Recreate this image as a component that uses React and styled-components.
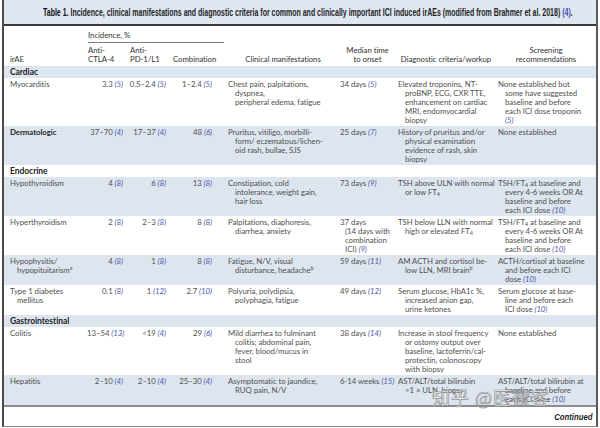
import React from 'react';
import styled, { createGlobalStyle } from 'styled-components';

const GlobalStyle = createGlobalStyle`
  * {
    box-sizing: border-box;
  }
  body {
    margin: 0;
    background: #ffffff;
  }
`;

const COLS = '83px 40px 42px 48px 122px 57px 100px 1fr';

// per column: alignment, paddings and hanging indent
const columns = [
  { align: 'left', pl: 6, pr: 2, hang: 7 },
  { align: 'right', pl: 0, pr: 4, hang: 0 },
  { align: 'right', pl: 0, pr: 3, hang: 0 },
  { align: 'right', pl: 0, pr: 5, hang: 0 },
  { align: 'left', pl: 11, pr: 2, hang: 7 },
  { align: 'left', pl: 1, pr: 0, hang: 5 },
  { align: 'left', pl: 2, pr: 0, hang: 7 },
  { align: 'left', pl: 2, pr: 0, hang: 7 },
];

const Frame = styled.div`
  position: relative;
  width: 596px;
  margin-left: 2px;
  border-left: 2px solid #4a4a4a;
  border-right: 2px solid #5a5a5a;
  border-bottom: 1px solid #8a8a8a;
  font-family: Lato, 'Noto Sans', sans-serif;
  font-size: 7.8px;
  letter-spacing: -0.05px;
  color: #505050;
`;

const TitleBar = styled.div`
  height: 26px;
  display: flex;
  align-items: center;
  padding-left: 39px;
  background: #e0e7f1;
  border-bottom: 2px solid #3a3a3a;
  overflow: hidden;
`;

const Title = styled.span`
  display: inline-block;
  white-space: nowrap;
  font-family: 'Liberation Sans', Arial, sans-serif;
  font-weight: 700;
  font-size: 10px;
  letter-spacing: 0;
  color: #1f1f1f;
  transform: scaleX(0.7);
  transform-origin: left center;

  b {
    font-weight: 700;
    color: #111;
  }
  em {
    font-style: normal;
    color: #3f4fb0;
  }
`;

const Header = styled.div`
  display: grid;
  grid-template-columns: ${COLS};
  grid-template-rows: 17px 23px;
  color: #333;
`;

const Incidence = styled.div`
  grid-column: 2 / 5;
  align-self: end;
  width: 136px;
  margin-left: 1px;
  padding-bottom: 2px;
  border-bottom: 1px solid #7a7a7a;
  line-height: 9px;
`;

const HeadCell = styled.div`
  grid-row: 2;
  align-self: end;
  padding-bottom: 2px;
  padding-left: ${(p) => p.$pl || 0}px;
  text-align: ${(p) => p.$align || 'left'};
  line-height: 9px;
`;

const Section = styled.div`
  height: 12px;
  padding-left: 6px;
  line-height: 12px;
  font-weight: 700;
  font-size: 8.5px;
  color: #262626;
  background: ${(p) => (p.$shade ? '#dde5ef' : '#ffffff')};
`;

const Row = styled.div`
  display: grid;
  grid-template-columns: ${COLS};
  padding: 2px 0 1px;
  line-height: 9px;
  background: ${(p) => (p.$shade ? '#dde5ef' : '#ffffff')};
  ${(p) => p.$clip && 'height: 30px; overflow: hidden;'}
`;

const Cell = styled.div`
  text-align: ${(p) => p.$align};
  padding-left: ${(p) => p.$pl + p.$hang}px;
  padding-right: ${(p) => p.$pr}px;
  text-indent: -${(p) => p.$hang}px;
  font-weight: ${(p) => (p.$bold ? 700 : 400)};
  color: ${(p) => (p.$bold ? '#262626' : 'inherit')};
  white-space: nowrap;

  sub {
    font-size: 5.5px;
    line-height: 0;
    vertical-align: -1px;
  }
  sup {
    font-size: 5.5px;
    line-height: 0;
    vertical-align: 3px;
  }
`;

const Ref = styled.i`
  color: #4a56aa;
`;

const Footer = styled.div`
  height: 21px;
  display: flex;
  align-items: center;
  justify-content: flex-end;
  padding-right: 4px;
  border-top: 2px solid #8c8c8c;
`;

const Continued = styled.span`
  font-family: 'Liberation Sans', Arial, sans-serif;
  font-weight: 700;
  font-style: italic;
  font-size: 9px;
  letter-spacing: 0;
  color: #1f1f1f;
  display: inline-block;
  transform: scaleX(0.86);
  transform-origin: right center;
`;

const Watermark = styled.div`
  position: absolute;
  left: 428px;
  top: 384px;
  font-family: 'Noto Sans CJK SC', sans-serif;
  font-size: 18px;
  letter-spacing: 1px;
  color: rgba(255, 255, 255, 0.8);
  -webkit-text-stroke: 0.7px rgba(110, 110, 110, 0.75);
  white-space: nowrap;
  pointer-events: none;
`;

const r = (n) => <Ref>({n})</Ref>;
const FT4 = (
  <>
    FT<sub>4</sub>
  </>
);

const rows = [
  { section: 'Cardiac', shade: true },
  {
    cells: [
      'Myocarditis',
      <>3.3 {r(5)}</>,
      <>0.5–2.4 {r(5)}</>,
      <>1–2.4 {r(5)}</>,
      <>Chest pain, palpitations,<br />dyspnea,<br />peripheral edema, fatigue</>,
      <>34 days {r(5)}</>,
      <>Elevated troponins, NT-<br />proBNP, ECG, CXR TTE,<br />enhancement on cardiac<br />MRI, endomyocardial<br />biopsy</>,
      <>None established but<br />some have suggested<br />baseline and before<br />each ICI dose troponin<br />{r(5)}</>,
    ],
  },
  {
    shade: true,
    bold: true,
    cells: [
      'Dermatologic',
      <>37–70 {r(4)}</>,
      <>17–37 {r(4)}</>,
      <>48 {r(6)}</>,
      <>Pruritus, vitiligo, morbilli-<br />form/ eczematous/lichen-<br />oid rash, bullae, SJS</>,
      <>25 days {r(7)}</>,
      <>History of pruritus and/or<br />physical examination<br />evidence of rash, skin<br />biopsy</>,
      'None established',
    ],
  },
  { section: 'Endocrine' },
  {
    shade: true,
    cells: [
      'Hypothyroidism',
      <>4 {r(8)}</>,
      <>6 {r(8)}</>,
      <>13 {r(8)}</>,
      <>Constipation, cold<br />intolerance, weight gain,<br />hair loss</>,
      <>73 days {r(9)}</>,
      <>TSH above ULN with normal<br />or low {FT4}</>,
      <>TSH/{FT4} at baseline and<br />every 4-6 weeks OR At<br />baseline and before<br />each ICI dose {r(10)}</>,
    ],
  },
  {
    cells: [
      'Hyperthyroidism',
      <>2 {r(8)}</>,
      <>2–3 {r(8)}</>,
      <>8 {r(8)}</>,
      <>Palpitations, diaphoresis,<br />diarrhea, anxiety</>,
      <>37 days<br />(14 days with<br />combination<br />ICI) {r(9)}</>,
      <>TSH below LLN with normal<br />high or elevated {FT4}</>,
      <>TSH/{FT4} at baseline and<br />every 4-6 weeks OR At<br />baseline and before<br />each ICI dose {r(10)}</>,
    ],
  },
  {
    shade: true,
    cells: [
      <>Hypophysitis/<br />hypopituitarism<sup>a</sup></>,
      <>4 {r(8)}</>,
      <>1 {r(8)}</>,
      <>8 {r(8)}</>,
      <>Fatigue, N/V, visual<br />disturbance, headache<sup>b</sup></>,
      <>59 days {r(11)}</>,
      <>AM ACTH and cortisol be-<br />low LLN, MRI brain<sup>b</sup></>,
      <>ACTH/cortisol at baseline<br />and before each ICI<br />dose {r(10)}</>,
    ],
  },
  {
    cells: [
      <>Type 1 diabetes<br />mellitus</>,
      <>0.1 {r(8)}</>,
      <>1 {r(12)}</>,
      <>2.7 {r(10)}</>,
      <>Polyuria, polydipsia,<br />polyphagia, fatigue</>,
      <>49 days {r(12)}</>,
      <>Serum glucose, HbA1c %,<br />increased anion gap,<br />urine ketones</>,
      <>Serum glucose at base-<br />line and before each<br />ICI dose {r(10)}</>,
    ],
  },
  { section: 'Gastrointestinal', shade: true },
  {
    cells: [
      'Colitis',
      <>13–54 {r(13)}</>,
      <>&lt;19 {r(4)}</>,
      <>29 {r(6)}</>,
      <>Mild diarrhea to fulminant<br />colitis; abdominal pain,<br />fever, blood/mucus in<br />stool</>,
      <>38 days {r(14)}</>,
      <>Increase in stool frequency<br />or ostomy output over<br />baseline, lactoferrin/cal-<br />protectin, colonoscopy<br />with biopsy</>,
      'None established',
    ],
  },
  {
    shade: true,
    clip: true,
    cells: [
      'Hepatitis',
      <>2–10 {r(4)}</>,
      <>2–10 {r(4)}</>,
      <>25–30 {r(4)}</>,
      <>Asymptomatic to jaundice,<br />RUQ pain, N/V</>,
      <>6-14 weeks {r(15)}</>,
      <>AST/ALT/total bilirubin<br />&gt;1 × ULN, biopsy</>,
      <>AST/ALT/total bilirubin at<br />baseline and before<br />each ICI dose {r(10)}</>,
    ],
  },
];

const App = () => {
  return (
    <Frame>
      <GlobalStyle />
      <TitleBar>
        <Title>
          <b>Table 1.</b> Incidence, clinical manifestations and diagnostic criteria for common and
          clinically important ICI induced irAEs (modified from Brahmer et al. 2018) <em>(4)</em>.
        </Title>
      </TitleBar>
      <Header>
        <Incidence>Incidence, %</Incidence>
        <HeadCell $pl={6}>irAE</HeadCell>
        <HeadCell $pl={1}>
          Anti-
          <br />
          CTLA-4
        </HeadCell>
        <HeadCell $pl={3}>
          Anti-
          <br />
          PD-1/L1
        </HeadCell>
        <HeadCell $pl={4}>Combination</HeadCell>
        <HeadCell $align="center" $pl={10}>
          Clinical manifestations
        </HeadCell>
        <HeadCell $align="center">
          Median time
          <br />
          to onset
        </HeadCell>
        <HeadCell $align="center">Diagnostic criteria/workup</HeadCell>
        <HeadCell $align="center">
          Screening
          <br />
          recommendations
        </HeadCell>
      </Header>
      {rows.map((row, i) =>
        row.section ? (
          <Section key={i} $shade={row.shade}>
            {row.section}
          </Section>
        ) : (
          <Row key={i} $shade={row.shade} $clip={row.clip}>
            {row.cells.map((c, j) => (
              <Cell
                key={j}
                $align={columns[j].align}
                $pl={columns[j].pl}
                $pr={columns[j].pr}
                $hang={columns[j].hang}
                $bold={row.bold && j === 0}
              >
                {c}
              </Cell>
            ))}
          </Row>
        )
      )}
      <Footer>
        <Continued>Continued</Continued>
      </Footer>
      <Watermark>知乎 @医微客</Watermark>
    </Frame>
  );
};

export default App;
